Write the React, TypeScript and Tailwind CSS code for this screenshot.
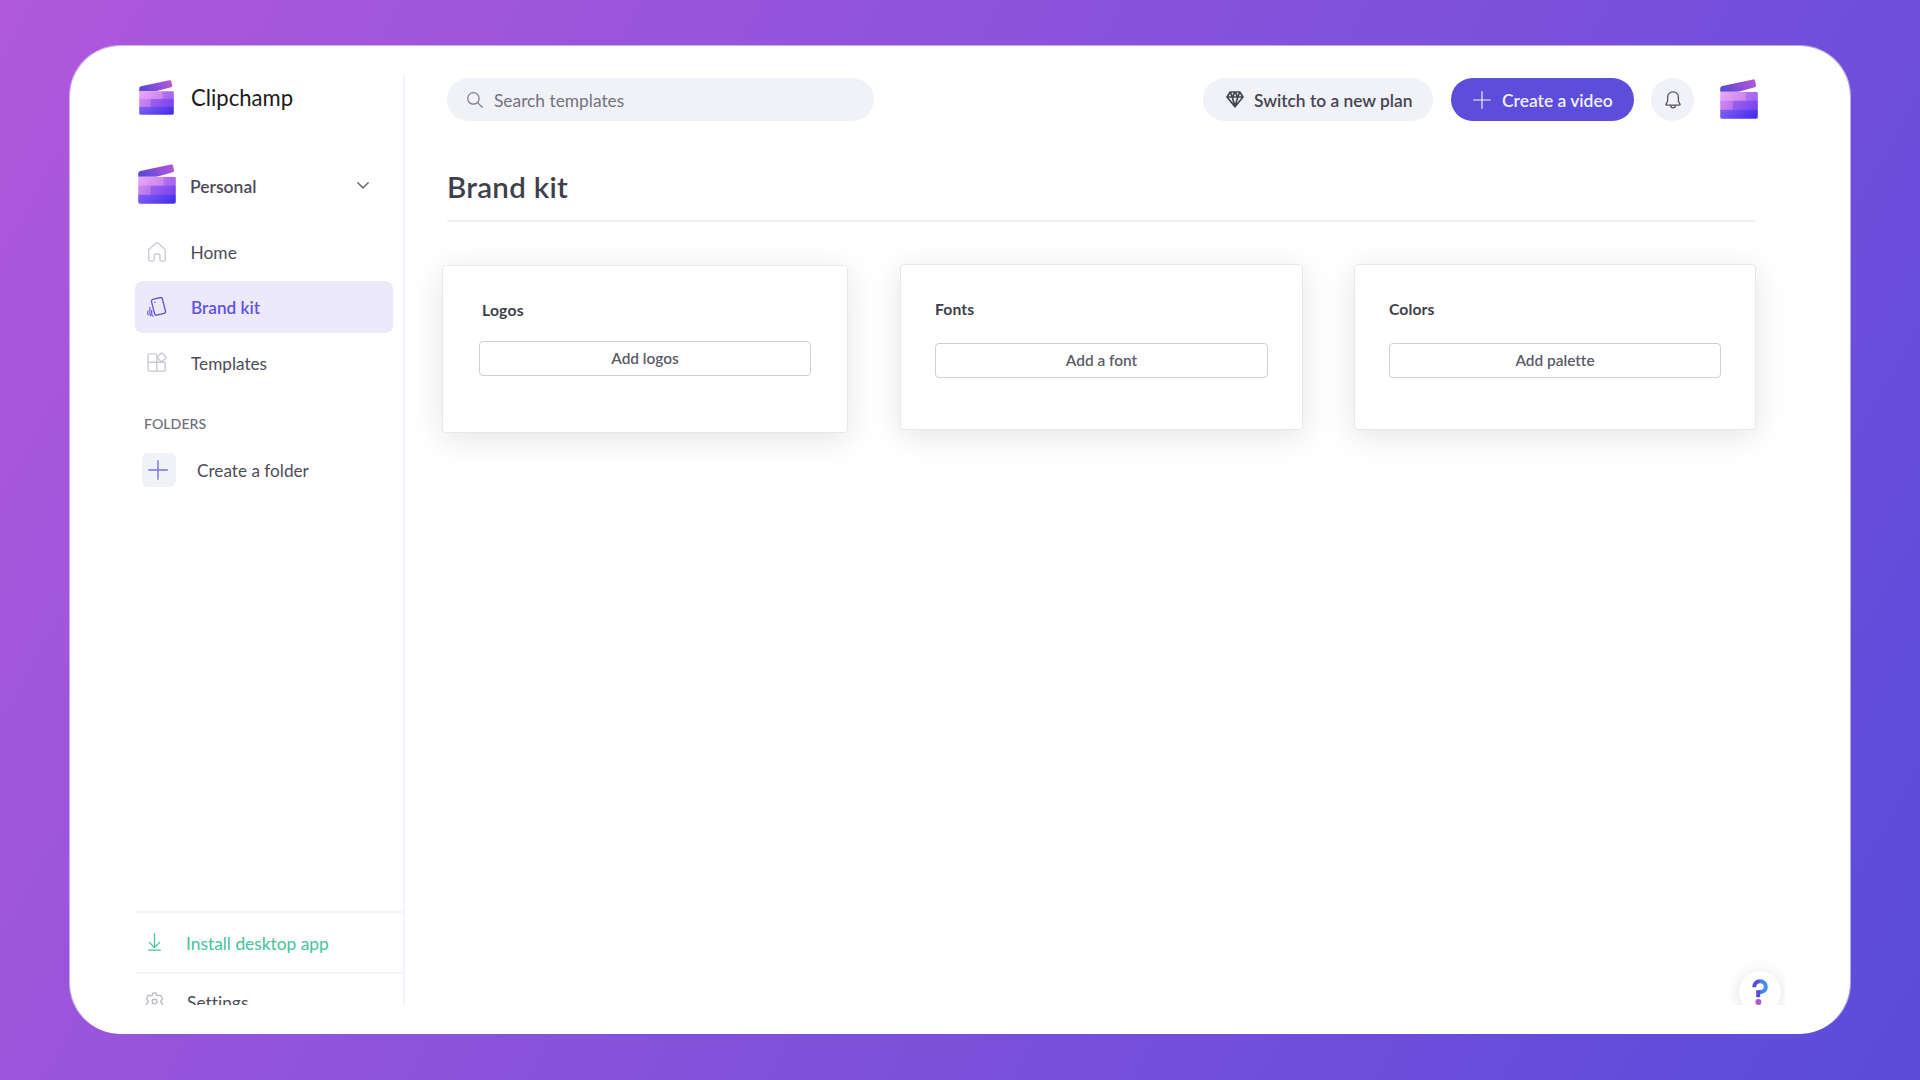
import React, { useId } from "react";

function ClipLogo({ className }: { className: string }) {
  const id = useId();
  const g = (n: string) => `${id}${n}`;
  const u = (n: string) => `url(#${id}${n})`;
  return (
    <svg viewBox="0 0 38 40" preserveAspectRatio="none" className={className} aria-hidden="true">
      <defs>
        <linearGradient id={g("lid")} x1="0" y1="0.6" x2="1" y2="0.4">
          <stop offset="0.05" stopColor="#5a4ad8" />
          <stop offset="1" stopColor="#b556d8" />
        </linearGradient>
        <linearGradient id={g("a")} x1="0" y1="0" x2="1" y2="0.3">
          <stop offset="0" stopColor="#eba8f6" />
          <stop offset="1" stopColor="#cd88ef" />
        </linearGradient>
        <linearGradient id={g("b")} x1="0" y1="0" x2="1" y2="0.5">
          <stop offset="0" stopColor="#b873f1" />
          <stop offset="1" stopColor="#a163f0" />
        </linearGradient>
        <linearGradient id={g("c")} x1="0" y1="0" x2="1" y2="0.4">
          <stop offset="0" stopColor="#d286f5" />
          <stop offset="1" stopColor="#bb76ec" />
        </linearGradient>
        <linearGradient id={g("d")} x1="0" y1="0" x2="1" y2="0.3">
          <stop offset="0" stopColor="#a062ee" />
          <stop offset="1" stopColor="#7a45ee" />
        </linearGradient>
        <linearGradient id={g("e")} x1="0" y1="0" x2="1" y2="0.3">
          <stop offset="0" stopColor="#8361f3" />
          <stop offset="1" stopColor="#4a32ec" />
        </linearGradient>
        <clipPath id={g("body")}>
          <path d="M0.2 12.8H36.3a1.5 1.5 0 0 1 1.5 1.5V38a1.8 1.8 0 0 1-1.8 1.8H2A1.8 1.8 0 0 1 .2 38Z" />
        </clipPath>
      </defs>
      <path
        d="M.2 12.8V9.6Q.2 7.6 2.2 7L33 .4Q34.6 0 35 1.5L36 6.2Q36.3 7.8 34.8 8.2L20.5 12.2Q18 12.8 15 12.8Z"
        fill={u("lid")}
      />
      <g clipPath={u("body")}>
        <rect x="0" y="12.5" width="26" height="9.5" fill={u("a")} />
        <rect x="25.5" y="12.5" width="13" height="9.5" fill={u("b")} />
        <rect x="0" y="21.7" width="13" height="9.4" fill={u("c")} />
        <rect x="12.6" y="21.7" width="26" height="9.4" fill={u("d")} />
        <rect x="0" y="30.8" width="38" height="9.4" fill={u("e")} />
      </g>
    </svg>
  );
}

function HomeIcon() {
  return (
    <svg viewBox="0 0 20 20" className="-mt-px h-5 w-5" fill="none" stroke="#cbcad6" strokeWidth="1.4" strokeLinejoin="round">
      <path d="M9.1 1.1a1.3 1.3 0 0 1 1.8 0l6.900 6.200c.3.3.5.7.5 1.100V17.600a1.500 1.500 0 0 1-1.500 1.500H14.200a1.300 1.300 0 0 1-1.300-1.300V13.300a1.300 1.300 0 0 0-1.300-1.300H8.500a1.300 1.300 0 0 0-1.300 1.300v4.500a1.300 1.300 0 0 1-1.300 1.300H3.200a1.500 1.500 0 0 1-1.500-1.500V8.400c0-.400.200-.800.500-1.100Z" />
    </svg>
  );
}

function BrandIcon() {
  return (
    <svg viewBox="0 0 20 20" className="h-5 w-5" fill="none" stroke="#5f50dc" strokeWidth="1.3" strokeLinecap="round" strokeLinejoin="round">
      <rect x="5.900" y="1.300" width="11.200" height="16.200" rx="1.700" transform="rotate(-14 11.500 9.400)" />
      <circle cx="7.800" cy="5.400" r="0.700" fill="#5f50dc" stroke="none" />
      <path d="M2.900 10.200V16.600Q3 18 3.900 18.700M4.700 13.200V17Q4.900 18.600 6 19.200M1 13.800.700 16Q.600 17.200 1.300 18" strokeWidth="1.100" />
    </svg>
  );
}

function TemplatesIcon() {
  return (
    <svg viewBox="0 0 20 20" className="h-5 w-5" fill="none" stroke="#cbcad6" strokeWidth="1.400" strokeLinejoin="round">
      <path d="M9.800 10.300V3.200A1.300 1.300 0 0 0 8.500 1.900H2.400A1.300 1.300 0 0 0 1.100 3.200V17.800A1.300 1.300 0 0 0 2.400 19.100H17a1.300 1.300 0 0 0 1.300-1.300V11.600a1.300 1.300 0 0 0-1.300-1.300H1.100M9.800 10.300V19.100" />
      <rect x="11.300" y="2" width="6.800" height="6.800" rx="1" transform="rotate(45 14.700 5.400)" />
    </svg>
  );
}

function Plus({ className }: { className: string }) {
  return (
    <svg viewBox="0 0 20 20" className={className} fill="none" stroke="currentColor" strokeWidth="1.300" strokeLinecap="round">
      <path d="M10 .7V19.300M.7 10H19.300" />
    </svg>
  );
}

function Sidebar() {
  return (
    <aside className="flex w-[270px] shrink-0 flex-col border-r-2 border-[#f4f3fb]">
      <div className="flex h-[45px] items-center pl-1">
        <ClipLogo className="h-[35px] w-[35px]" />
        <span className="ml-[17px] mt-[2px] text-[22.100px] leading-none text-[#1b1b1d]">Clipchamp</span>
      </div>
      <button className="mt-[42px] flex h-[44px] items-center pl-[3px] pr-[34px]">
        <ClipLogo className="h-10 w-[38px]" />
        <span className="ml-[14px] mt-[5px] text-[17.500px] font-semibold leading-none text-[#4b4a57]">Personal</span>
        <svg viewBox="0 0 12 7" className="ml-auto mt-[3px] h-[7px] w-3" fill="none" stroke="#6e6d7c" strokeWidth="1.500" strokeLinecap="round" strokeLinejoin="round">
          <path d="M.8.800 6 5.900 11.200.800" />
        </svg>
      </button>
      <nav className="mt-5 flex flex-col text-[#4d4c58]">
        <a className="flex h-[52px] items-center pl-3">
          <HomeIcon />
          <span className="ml-[23.500px] mt-[2px] text-[17.400px] leading-none">Home</span>
        </a>
        <a className="mr-[10px] mt-[3px] flex h-[52px] items-center rounded-lg bg-[#ebe9fa] pl-3 text-[#6152df]">
          <BrandIcon />
          <span className="ml-6 mt-px text-[17.200px] font-semibold leading-none">Brand kit</span>
        </a>
        <a className="mt-[3px] flex h-[52px] items-center pl-3">
          <TemplatesIcon />
          <span className="ml-[24px] mt-[3px] text-[17.200px] leading-none">Templates</span>
        </a>
      </nav>
      <h2 className="mt-[26px] h-5 pl-[9px] text-[14.200px] font-medium leading-5 text-[#6f6e7d]">FOLDERS</h2>
      <button className="mt-[19px] flex h-[34px] items-center pl-[7px]">
        <span className="flex h-[34px] w-[34px] items-center rounded-md bg-[#f1f1f8] pl-[6px] text-[#7a6ce6]">
          <Plus className="h-5 w-5" />
        </span>
        <span className="ml-[21px] mt-[2px] text-[17.200px] leading-none text-[#4d4c58]">Create a folder</span>
      </button>
      <div className="mt-auto flex h-[94px] flex-col overflow-hidden">
        <a className="flex h-[61px] shrink-0 items-center border-t-2 border-[#f4f3fb] pl-[13px] text-[#45c39c]">
          <svg viewBox="0 0 13 18" className="-mt-px h-[18px] w-[13px]" fill="none" stroke="currentColor" strokeWidth="1.300" strokeLinecap="round" strokeLinejoin="round">
            <path d="M6.500.7V14.200M1.300 9.400 6.500 14.500 11.700 9.400M.7 17.200H12.300" />
          </svg>
          <span className="ml-[25px] mt-[2px] text-[17.350px] leading-none">Install desktop app</span>
        </a>
        <a className="flex h-[58px] shrink-0 items-center border-t-2 border-[#f4f3fb] pl-[10px] text-[#4d4c58]">
          <svg viewBox="0 0 20 20" className="-mt-[2px] h-[19px] w-[19px]" fill="none" stroke="#b9b8c6" strokeWidth="1.400" strokeLinejoin="round">
            <path d="M8.200 1.200Q10 .6 11.800 1.200L12.300 3.200Q12.700 4.200 13.800 4L16 3.400Q17.800 4.900 18.500 7.200L17 8.900Q16.300 10 17 11.100L18.500 12.800Q17.800 15.100 16 16.600L13.800 16Q12.700 15.800 12.300 16.800L11.800 18.800Q10 19.400 8.200 18.800L7.700 16.800Q7.300 15.800 6.200 16L4 16.600Q2.200 15.100 1.500 12.800L3 11.100Q3.700 10 3 8.900L1.500 7.200Q2.200 4.900 4 3.400L6.200 4Q7.300 4.200 7.700 3.200Z" />
            <circle cx="10" cy="10" r="2.500" />
          </svg>
          <span className="ml-[23px] mt-px text-[17.400px] leading-none">Settings</span>
        </a>
      </div>
    </aside>
  );
}

function TopBar() {
  return (
    <header className="mt-[3px] -mr-[3px] flex h-[43px] shrink-0 items-center text-[17.350px] leading-none">
      <label className="flex h-[43px] w-[427px] items-center rounded-full bg-[#f1f1f8] pl-5 text-[#73727e]">
        <svg viewBox="0 0 16 16" className="h-4 w-4" fill="none" stroke="#82818d" strokeWidth="1.300" strokeLinecap="round">
          <circle cx="6.400" cy="6.400" r="5.700" />
          <path d="M10.600 10.600 15.300 15.300" />
        </svg>
        <span className="ml-[11px] mt-[3px]">Search templates</span>
      </label>
      <button className="ml-[329px] flex h-[43px] w-[230px] items-center rounded-full bg-[#f1f1f8] pl-[23px] font-semibold text-[#454452]">
        <svg viewBox="0 0 18 17" className="h-[17px] w-[18px]" fill="none" stroke="#454452" strokeWidth="1.700" strokeLinejoin="round">
          <path d="M4.200 1H13.800L17 6 9 15.800 1 6ZM1 6H17M6.200 6 9 1.200 11.800 6 9 15.500ZM4.200 1 6.200 6M13.800 1 11.800 6" />
        </svg>
        <span className="ml-[10px] mt-[3px] whitespace-nowrap">Switch to a new plan</span>
      </button>
      <button className="ml-[18px] flex h-[43px] w-[183px] items-center rounded-full bg-[#5c4dda] pl-[22px] font-semibold text-[#f1effd]">
        <Plus className="h-[18px] w-[18px]" />
        <span className="ml-[11px] mt-[3px] whitespace-nowrap text-[17.450px]">Create a video</span>
      </button>
      <button className="ml-[17px] flex h-[43px] w-[43px] items-center justify-center rounded-full bg-[#f1f1f8]">
        <svg viewBox="0 0 16 18" className="h-[18px] w-4" fill="none" stroke="#55545f" strokeWidth="1.300" strokeLinecap="round" strokeLinejoin="round">
          <path d="M8 .8C4.900.8 2.600 3.200 2.600 6.200V10.300L.9 13.400Q.8 14.100 1.500 14.100H14.500Q15.200 14.100 15.100 13.400L13.400 10.300V6.200C13.400 3.200 11.100.8 8 .8Z" />
          <path d="M5.700 14.300C5.700 17.800 10.300 17.800 10.300 14.300" />
        </svg>
      </button>
      <ClipLogo className="-mt-px ml-auto h-10 w-[38px]" />
    </header>
  );
}

const outline =
  "flex h-[35px] w-full items-center justify-center rounded-[4px] border-[1.500px] border-[#d0cedb] pt-px text-[15.400px] font-semibold leading-none text-[#5c5b68]";
const cardShadow = "border border-[#e8e7ef] bg-white shadow-[0_6px_32px_rgba(0,0,0,0.110)]";

export default function App() {
  return (
    <div
      className="h-[1080px] w-[1920px] overflow-hidden bg-[linear-gradient(119deg,#af58db_0%,#5a4bdb_100%)] pl-[69px] pt-[45px] [font-variant-ligatures:none]"
      style={{ fontFamily: 'Lato, "Liberation Sans", sans-serif' }}
    >
      <div className="h-[989px] w-[1782px] rounded-[51px] border border-b-0 border-white/50 bg-white bg-clip-padding pl-[65px] pt-[29px]">
        <div className="relative flex h-[930px] w-[1650px] overflow-hidden">
          <Sidebar />
          <main className="flex min-w-0 flex-1 flex-col pl-[42px] pr-[30px]">
            <TopBar />
            <div className="mt-[45px] border-b-2 border-[#f0f0f3] pb-[13px]">
              <h1 className="h-[41px] text-[29.500px] font-semibold leading-[41px] tracking-[0.300px] text-[#403f4c]">Brand kit</h1>
            </div>
            <div className="-ml-[5px] -mr-[1px] mt-[42px] flex items-start text-[#403f4c]">
              <section className={`mt-px h-[168px] w-[406px] shrink-0 rounded-[4px] px-[36px] pt-[34px] ${cardShadow}`}>
                <h2 className="ml-[3px] h-5 text-[15.700px] font-bold leading-5 tracking-[0.200px]">Logos</h2>
                <button className={`mt-[21px] ${outline}`}>Add logos</button>
              </section>
              <section className={`ml-[52px] h-[166px] w-[403px] shrink-0 rounded-[4px] px-[34px] pt-[34px] ${cardShadow}`}>
                <h2 className="h-5 text-[15.700px] font-bold leading-5 tracking-[0.100px]">Fonts</h2>
                <button className={`mt-[24px] ${outline}`}>Add a font</button>
              </section>
              <section className={`ml-[51px] h-[166px] w-[402px] shrink-0 rounded-[4px] px-[34px] pt-[34px] ${cardShadow}`}>
                <h2 className="h-5 text-[15.700px] font-bold leading-5 tracking-[0.100px]">Colors</h2>
                <button className={`mt-[24px] ${outline}`}>Add palette</button>
              </section>
            </div>
          </main>
          <button className="absolute left-[1604px] top-[896px] flex h-[42px] w-[42px] justify-center rounded-full bg-white pt-2 shadow-[0_2px_18px_rgba(0,0,0,0.120)]" aria-label="Help">
            <svg viewBox="0 0 16 26" className="h-[26px] w-4" fill="none" strokeWidth="4">
              <defs>
                <linearGradient id="help-hook" x1="0" y1="0" x2="1" y2="0">
                  <stop offset="0.350" stopColor="#5b4bdc" />
                  <stop offset="0.550" stopColor="#4783e6" />
                  <stop offset="1" stopColor="#4590ee" />
                </linearGradient>
              </defs>
              <path d="M2.200 8.200C2.200 4.600 4.600 2.200 8 2.200C11.400 2.200 13.800 4.700 13.800 7.900C13.800 11.600 11 13.200 6.600 13.200" stroke="url(#help-hook)" />
              <path d="M6.200 11.200V18.200" stroke="#5b4bdc" />
              <circle cx="6.400" cy="23" r="3" fill="#b156d9" />
            </svg>
          </button>
        </div>
      </div>
    </div>
  );
}
